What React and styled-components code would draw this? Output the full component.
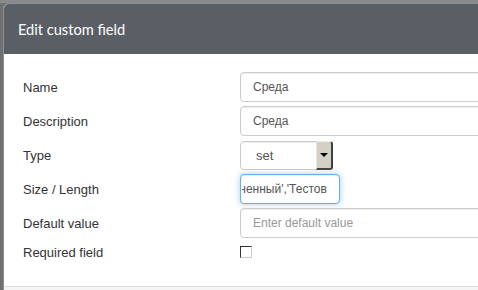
import React, { useEffect, useRef } from 'react';
import styled, { createGlobalStyle } from 'styled-components';

const GlobalStyle = createGlobalStyle`
  html, body {
    margin: 0;
    padding: 0;
    width: 478px;
    height: 290px;
    overflow: hidden;
    background: #6f7072;
  }
  * {
    box-sizing: border-box;
  }
`;

const Backdrop = styled.div`
  width: 478px;
  height: 290px;
  padding: 3px 0 0 3px;
  background: linear-gradient(#8a8b8c 0, #8a8b8c 3px, #6f7072 3px);
  overflow: hidden;
`;

const Modal = styled.div`
  width: 560px;
  background: #fff;
  border: 1px solid #8d8f92;
  border-radius: 6px 0 0 0;
  overflow: hidden;
`;

const Header = styled.div`
  height: 50px;
  background: #5a5f66;
  display: flex;
  align-items: center;
  padding: 0 14px;
`;

const Title = styled.h4`
  margin: 0;
  font-family: 'Lato', 'Noto Sans', sans-serif;
  font-weight: 400;
  font-size: 14.6px;
  color: #fff;
`;

const Body = styled.div`
  padding: 18px 0 24px 19px;
  display: grid;
  grid-template-columns: 217px 1fr;
  row-gap: 4px;
  font-family: 'Liberation Sans', Arial, sans-serif;
`;

const Label = styled.label`
  display: flex;
  align-items: center;
  font-size: 13px;
  color: #333;
  min-height: ${({ $short }) => ($short ? '20px' : '30px')};
`;

const Field = styled.div`
  display: flex;
  align-items: center;
`;

const Input = styled.input`
  width: ${({ $width }) => $width || '260px'};
  height: 30px;
  padding: ${({ $scrolled }) => ($scrolled ? '0 12px 0 1px' : '0 12px')};
  font-family: 'Liberation Sans', Arial, sans-serif;
  font-size: 12px;
  color: #555;
  background: #fff;
  border: 1px solid ${({ $focus }) => ($focus ? '#66afe9' : '#ccc')};
  border-radius: 4px;
  box-shadow: ${({ $focus }) =>
    $focus
      ? 'inset 0 1px 1px rgba(0,0,0,.075), 0 0 6px rgba(102,175,233,.6)'
      : 'inset 0 1px 1px rgba(0,0,0,.075)'};
  outline: none;

  &::placeholder {
    color: #999;
  }
`;

const SelectBox = styled.div`
  width: 93px;
  height: 29px;
  display: flex;
  border: 1px solid #ccc;
  border-radius: 4px;
  background: #fff;
  box-shadow: inset 0 1px 1px rgba(0,0,0,.075);
`;

const Select = styled.select`
  flex: 1;
  min-width: 0;
  appearance: none;
  border: none;
  background: transparent;
  padding: 0 0 0 15px;
  font-family: 'Liberation Sans', Arial, sans-serif;
  font-size: 13px;
  color: #555;
  outline: none;
`;

const ArrowButton = styled.span`
  width: 17px;
  margin: -1px -1px -1px 0;
  display: flex;
  align-items: center;
  justify-content: center;
  background: #d4d0c8;
  border-top: 1px solid #f0eee9;
  border-left: 1px solid #e8e6e1;
  border-right: 2px solid #404040;
  border-bottom: 2px solid #404040;
  border-radius: 0 3px 3px 0;

  &::after {
    content: '';
    border-left: 4px solid transparent;
    border-right: 4px solid transparent;
    border-top: 4px solid #000;
  }
`;

const Checkbox = styled.span`
  width: 12px;
  height: 12px;
  border: 1px solid #333;
  border-right-color: #ccc;
  border-bottom-color: #ccc;
  background: #fff;
`;

const Footer = styled.div`
  height: 6px;
  border-top: 1px solid #dcdcdc;
  background: #f5f5f5;
`;

const ScrolledInput = () => {
  const ref = useRef(null);
  useEffect(() => {
    if (ref.current) ref.current.scrollLeft = ref.current.scrollWidth;
  }, []);
  return (
    <Input
      ref={ref}
      $focus
      $scrolled
      $width="100px"
      defaultValue="'Основной','Измененный','Тестов"
    />
  );
};

export default function App() {
  return (
    <>
      <GlobalStyle />
      <Backdrop>
        <Modal>
          <Header>
            <Title>Edit custom field</Title>
          </Header>
          <Body>
            <Label>Name</Label>
            <Field>
              <Input defaultValue="Среда" />
            </Field>

            <Label>Description</Label>
            <Field>
              <Input defaultValue="Среда" />
            </Field>

            <Label>Type</Label>
            <Field>
              <SelectBox>
                <Select defaultValue="set">
                  <option value="set">set</option>
                  <option value="enum">enum</option>
                  <option value="varchar">varchar</option>
                </Select>
                <ArrowButton />
              </SelectBox>
            </Field>

            <Label>Size / Length</Label>
            <Field>
              <ScrolledInput />
            </Field>

            <Label>Default value</Label>
            <Field>
              <Input placeholder="Enter default value" />
            </Field>

            <Label $short>Required field</Label>
            <Field>
              <Checkbox />
            </Field>
          </Body>
          <Footer />
        </Modal>
      </Backdrop>
    </>
  );
}
